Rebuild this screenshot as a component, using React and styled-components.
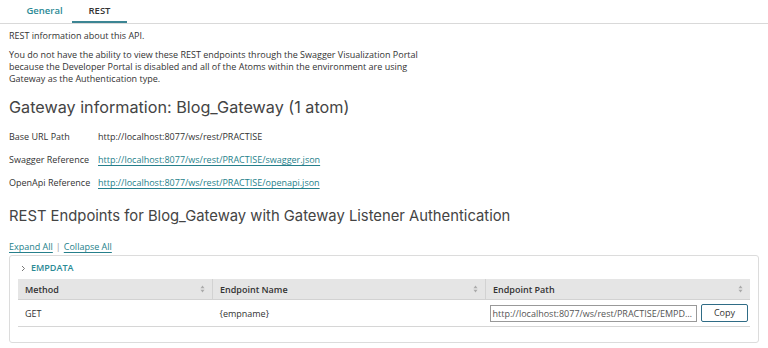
import styled, { createGlobalStyle } from 'styled-components';

const GlobalStyle = createGlobalStyle`
  body {
    margin: 0;
    background: #fff;
    font-family: "Open Sans", "Liberation Sans", sans-serif;
    color: #333;
  }
`;

const Page = styled.div`
  width: 768px;
  height: 348px;
  overflow: hidden;
`;

const Tabs = styled.div`
  display: flex;
  padding-left: 17px;
  border-bottom: 1px solid #d9d9d9;
  height: 23px;
`;

const Tab = styled.div`
  width: 55px;
  font-size: 9.5px;
  font-weight: 600;
  text-align: center;
  line-height: 22px;
  color: ${(p) => (p.active ? '#333' : '#2b8a95')};
  border-bottom: ${(p) => (p.active ? '2px solid #3c8593' : '2px solid transparent')};
`;

const Content = styled.div`
  padding: 0 9px;
  font-size: 9px;
`;

const Intro = styled.p`
  margin: 6px 0 0;
  line-height: 12px;
`;

const Notice = styled.p`
  margin: 7px 0 0;
  line-height: 12px;
  width: 425px;
`;

const Heading = styled.h2`
  font-family: Inter, "Noto Sans", sans-serif;
  font-weight: 400;
  font-size: 16.2px;
  color: #444;
  margin: 11px 0 0;
  line-height: 22px;
`;

const SubHeading = styled(Heading)`
  font-size: 14.8px;
  margin-top: 17px;
  line-height: 20px;
`;

const InfoList = styled.div`
  margin-top: 13px;
  display: grid;
  grid-template-columns: 89px auto;
  row-gap: 11px;
  line-height: 12px;
`;

const Label = styled.span``;

const Link = styled.a`
  color: #267f8b;
  text-decoration: underline;
  text-underline-offset: 2px;
  width: fit-content;
`;

const Actions = styled.div`
  margin-top: 15px;
  line-height: 12px;
  color: #999;
  display: flex;
  gap: 3px;
`;

const Panel = styled.div`
  margin-top: 2px;
  border: 1px solid #dcdcdc;
  border-radius: 3px;
  padding: 6px 8px 15px;
`;

const GroupTitle = styled.div`
  color: #2b8a95;
  font-weight: 600;
  padding-left: 3px;
  line-height: 12px;
  display: flex;
  gap: 5px;
  margin-bottom: 5px;
`;

const Table = styled.table`
  width: 100%;
  border-collapse: collapse;
  table-layout: fixed;
  font-size: 9px;
`;

const Th = styled.th`
  background: #e5e5e5;
  text-align: left;
  font-weight: 600;
  height: 20px;
  padding: 0 7px;
  border-left: 1px solid #d2d2d2;
  border-bottom: 1px solid #d2d2d2;
  width: ${(p) => p.w || 'auto'};
  &:first-child { border-left: none; }
`;

const ThInner = styled.div`
  display: flex;
  justify-content: space-between;
  align-items: center;
`;

const Td = styled.td`
  height: 26px;
  padding: 0 7px;
  border-bottom: 1px solid #d6d6d6;
  &:last-child { padding: 0 2px 0 4px; }
`;

const PathCell = styled.div`
  display: flex;
  gap: 4px;
  align-items: center;
`;

const PathInput = styled.div`
  flex: 1;
  min-width: 0;
  height: 17px;
  border: 1px solid #999;
  line-height: 15px;
  padding: 0 2px;
  color: #555;
  overflow: hidden;
  white-space: nowrap;
  text-overflow: ellipsis;
  box-sizing: border-box;
`;

const CopyButton = styled.button`
  flex: none;
  width: 47px;
  height: 18px;
  border: 1px solid #2f6c86;
  border-radius: 2px;
  background: #fff;
  font-family: inherit;
  font-size: 9px;
  line-height: 16px;
  color: #333;
  padding: 0;
`;

const SortIcon = () => (
  <svg width="5" height="8" viewBox="0 0 5 8">
    <path d="M2.5 0.5 L4.5 3.2 L0.5 3.2 Z" fill="#aaa" />
    <path d="M2.5 7.5 L4.5 4.8 L0.5 4.8 Z" fill="#aaa" />
  </svg>
);

const Chevron = () => (
  <svg width="5" height="12" viewBox="0 0 5 12">
    <path d="M1 4 L3.5 6.5 L1 9" stroke="#666" strokeWidth="0.9" fill="none" />
  </svg>
);

const columns = [
  { name: 'Method', w: '180px' },
  { name: 'Endpoint Name', w: '258px' },
  { name: 'Endpoint Path', w: 'auto' },
];

export default function App() {
  return (
    <Page>
      <GlobalStyle />
      <Tabs>
        <Tab>General</Tab>
        <Tab active>REST</Tab>
      </Tabs>
      <Content>
        <Intro>REST information about this API.</Intro>
        <Notice>
          You do not have the ability to view these REST endpoints through the Swagger Visualization Portal
          because the Developer Portal is disabled and all of the Atoms within the environment are using
          Gateway as the Authentication type.
        </Notice>
        <Heading>Gateway information: Blog_Gateway (1 atom)</Heading>
        <InfoList>
          <Label>Base URL Path</Label>
          <span>http://localhost:8077/ws/rest/PRACTISE</span>
          <Label>Swagger Reference</Label>
          <Link>http://localhost:8077/ws/rest/PRACTISE/swagger.json</Link>
          <Label>OpenApi Reference</Label>
          <Link>http://localhost:8077/ws/rest/PRACTISE/openapi.json</Link>
        </InfoList>
        <SubHeading>REST Endpoints for Blog_Gateway with Gateway Listener Authentication</SubHeading>
        <Actions>
          <Link>Expand All</Link>|<Link>Collapse All</Link>
        </Actions>
        <Panel>
          <GroupTitle>
            <Chevron />
            EMPDATA
          </GroupTitle>
          <Table>
            <thead>
              <tr>
                {columns.map((c) => (
                  <Th key={c.name} w={c.w}>
                    <ThInner>
                      {c.name}
                      <SortIcon />
                    </ThInner>
                  </Th>
                ))}
              </tr>
            </thead>
            <tbody>
              <tr>
                <Td>GET</Td>
                <Td>{'{empname}'}</Td>
                <Td>
                  <PathCell>
                    <PathInput>http://localhost:8077/ws/rest/PRACTISE/EMPDATA/{'{empname}'}</PathInput>
                    <CopyButton>Copy</CopyButton>
                  </PathCell>
                </Td>
              </tr>
            </tbody>
          </Table>
        </Panel>
      </Content>
    </Page>
  );
}
